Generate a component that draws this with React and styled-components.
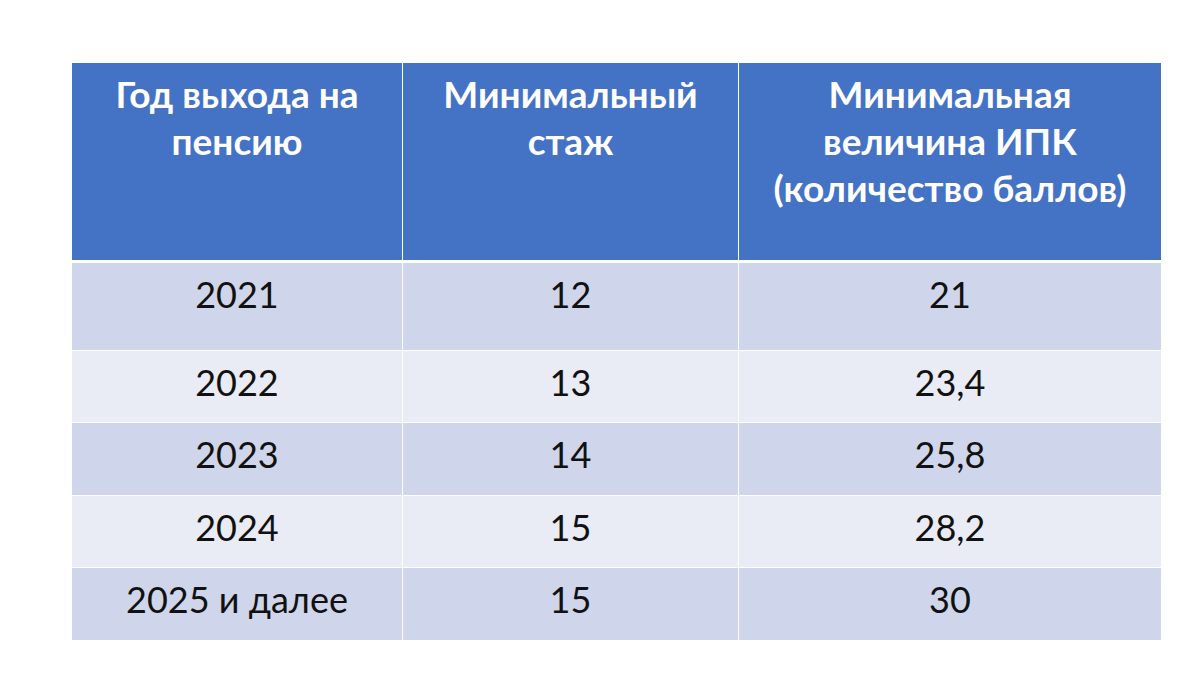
import React from "react";
import styled, { createGlobalStyle } from "styled-components";

const Global = createGlobalStyle`
  html, body { margin: 0; padding: 0; background: #ffffff; }
  body { width: 1200px; height: 675px; overflow: hidden; }
`;

const Page = styled.div`
  width: 1200px;
  height: 675px;
  box-sizing: border-box;
  padding: 63px 0 0 72px;
  background: #ffffff;
  font-family: "Lato", "Open Sans", sans-serif;
`;

const Grid = styled.div`
  display: grid;
  grid-template-columns: 331px 336px 422px;
  grid-template-rows: 200px 88px 72px 73px 72px 72px;
  width: 1089px;
`;

const Cell = styled.div`
  box-sizing: border-box;
  padding-top: ${(p) => (p.$head ? "7px" : "8px")};
  text-align: center;
  font-size: ${(p) => (p.$head ? "37px" : "36px")};
  line-height: 47px;
  color: ${(p) => (p.$head ? "#ffffff" : "#111111")};
  font-weight: ${(p) => (p.$head ? 700 : 400)};
  background: ${(p) => (p.$head ? "#4472C4" : p.$odd ? "#CFD5EA" : "#E9EBF5")};
  border-right: ${(p) => (p.$last ? "none" : "1.5px solid #ffffff")};
  border-bottom: ${(p) => (p.$head ? "3px solid #ffffff" : p.$bottom ? "none" : "1.5px solid #ffffff")};
`;

const headers = [
  ["Год выхода на", "пенсию"],
  ["Минимальный", "стаж"],
  ["Минимальная", "величина ИПК", "(количество баллов)"],
];

const rows = [
  ["2021", "12", "21"],
  ["2022", "13", "23,4"],
  ["2023", "14", "25,8"],
  ["2024", "15", "28,2"],
  ["2025 и далее", "15", "30"],
];

export default function App() {
  return (
    <>
      <Global />
      <Page>
        <Grid>
          {headers.map((h, i) => (
            <Cell key={"h" + i} $head $last={i === 2}>
              {h.map((l, j) => (
                <div key={j}>{l}</div>
              ))}
            </Cell>
          ))}
          {rows.map((r, ri) =>
            r.map((v, ci) => (
              <Cell
                key={ri + "-" + ci}
                $odd={ri % 2 === 0}
                $last={ci === 2}
                $bottom={ri === rows.length - 1}
              >
                {v}
              </Cell>
            ))
          )}
        </Grid>
      </Page>
    </>
  );
}
